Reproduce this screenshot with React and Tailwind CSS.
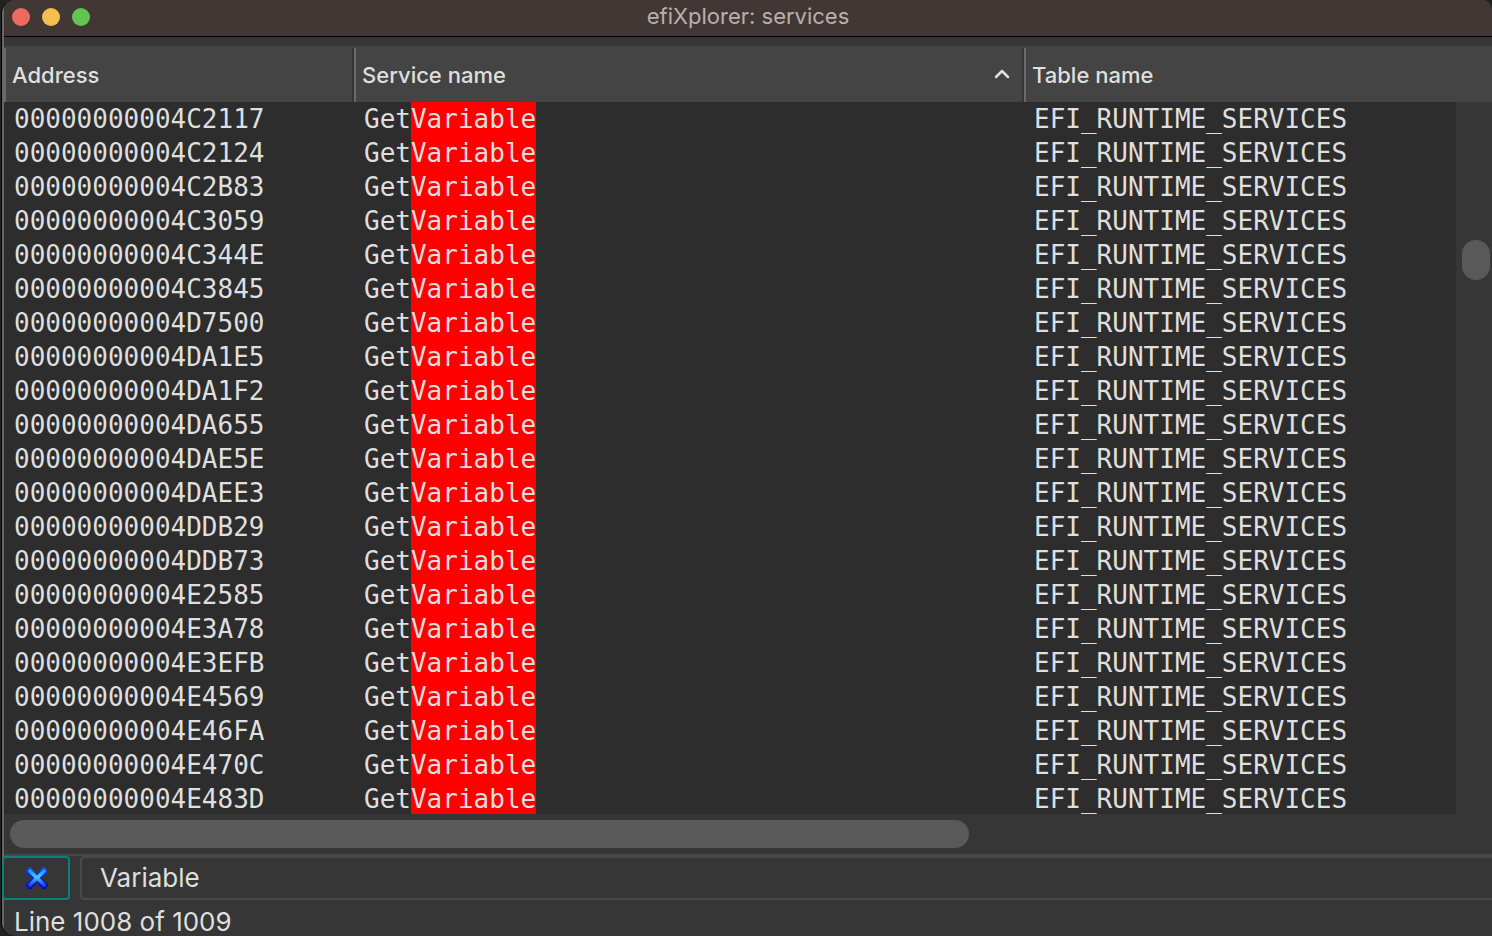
import { useState } from "react";

const ADDRESSES = [
  "4C2117",
  "4C2124",
  "4C2B83",
  "4C3059",
  "4C344E",
  "4C3845",
  "4D7500",
  "4DA1E5",
  "4DA1F2",
  "4DA655",
  "4DAE5E",
  "4DAEE3",
  "4DDB29",
  "4DDB73",
  "4E2585",
  "4E3A78",
  "4E3EFB",
  "4E4569",
  "4E46FA",
  "4E470C",
  "4E483D",
];

const services = ADDRESSES.map((address) => ({
  address: address.padStart(16, "0"),
  name: "GetVariable",
  table: "EFI_RUNTIME_SERVICES",
}));

const App = () => {
  const [filter, setFilter] = useState("Variable");

  return (
    <div className="h-screen overflow-hidden bg-[#222222] pl-px font-['Inter',sans-serif] text-[#dfdfdf]">
      <main className="flex h-full flex-col overflow-hidden rounded-l-[14px] rounded-tr-[10px] border-l border-black bg-[#363636]">
        <div className="flex min-h-0 flex-1 flex-col border-l-2 border-[#686868]">
          <TitleBar />
          <div className="flex min-h-0 flex-1 pt-[9px]">
            <div className="min-w-0 flex-1 overflow-hidden bg-[#2d2d2d]">
              <ServiceTable filter={filter} />
            </div>
            <VerticalScrollbar />
          </div>
          <div className="h-10 shrink-0 px-[6px] py-[6px]">
            <div className="h-7 w-[65%] rounded-full bg-[#595959]" />
          </div>
          <FilterBar filter={filter} setFilter={setFilter} />
          <p className="h-9 shrink-0 px-[10px] pt-1 text-[26px] leading-9">
            Line 1008 of 1009
          </p>
        </div>
      </main>
    </div>
  );
};

export default App;

const TitleBar = () => (
  <header className="grid h-[37px] shrink-0 grid-cols-[1fr_auto_1fr] items-center border-b border-black bg-[#413735] px-2 pb-[3px]">
    <div className="flex gap-3">
      <button aria-label="Close" className="size-[18px] rounded-full bg-[#ed6a5e]" />
      <button aria-label="Minimize" className="size-[18px] rounded-full bg-[#f5bf4f]" />
      <button aria-label="Zoom" className="size-[18px] rounded-full bg-[#61c554]" />
    </div>
    <h1 className="pb-[2px] text-[22px] leading-7 text-[#b8b0ae]">
      efiXplorer: services
    </h1>
  </header>
);

const ServiceTable = ({ filter }) => (
  <table className="w-full table-fixed border-collapse text-left">
    <colgroup>
      <col className="w-[350px]" />
      <col className="w-[670px]" />
      <col />
    </colgroup>
    <thead>
      <tr className="h-14 bg-[#444444] text-[22px] leading-8">
        <HeaderCell label="Address" />
        <HeaderCell label="Service name" sorted />
        <HeaderCell label="Table name" last />
      </tr>
    </thead>
    <tbody className="font-['DejaVu_Sans_Mono',monospace] text-[26px] leading-[34px]">
      {services.map((service) => (
        <tr key={service.address}>
          <td className="p-0 pl-[10px]">{service.address}</td>
          <td className="p-0 pl-[10px]">
            <Highlight text={service.name} match={filter} />
          </td>
          <td className="p-0 pl-[10px]">{service.table}</td>
        </tr>
      ))}
    </tbody>
  </table>
);

const HeaderCell = ({ label, sorted, last }) => (
  <th
    className="p-0 pt-[2px] font-medium"
    aria-sort={sorted ? "ascending" : undefined}
  >
    <button
      className={`flex h-[54px] w-full items-center justify-between border-l-2 border-l-[#6a6a6a] pr-3 pl-[6px] ${
        last ? "" : "border-r-2 border-r-[#363636]"
      }`}
    >
      {label}
      {sorted && (
        <svg width="16" height="12" viewBox="0 0 16 12" fill="none">
          <path
            d="M2 8L8 2L14 8"
            stroke="#dfdfdf"
            strokeWidth="2.5"
            strokeLinecap="round"
            strokeLinejoin="round"
          />
        </svg>
      )}
    </button>
  </th>
);

// Marks the part of the text that matches the quick filter
const Highlight = ({ text, match }) => {
  const start = match ? text.indexOf(match) : -1;
  if (start < 0) return text;

  return (
    <span className="flex">
      {text.slice(0, start)}
      <mark className="bg-[#ff0000] text-[#dfdfdf]">{match}</mark>
      {text.slice(start + match.length)}
    </span>
  );
};

const VerticalScrollbar = () => (
  <div className="w-9 shrink-0">
    <div className="h-14 bg-[#444444]" />
    <div className="mt-[138px] ml-[6px] h-10 w-7 rounded-full bg-[#595959]" />
  </div>
);

const FilterBar = ({ filter, setFilter }) => (
  <div className="flex h-[46px] shrink-0 gap-[10px] border-t-2 border-[#494949]">
    <button
      aria-label="Clear filter"
      className="-ml-[2px] flex w-[68px] items-center justify-center rounded-[4px] border-2 border-[#0c807b]"
      onClick={() => setFilter("")}
    >
      <ClearIcon />
    </button>
    <input
      type="text"
      aria-label="Quick filter"
      className="min-w-0 flex-1 rounded-l-[4px] border-2 border-r-0 border-[#494949] pb-[2px] pl-[18px] text-[26px] outline-none"
      value={filter}
      onChange={(e) => setFilter(e.target.value)}
    />
  </div>
);

const ClearIcon = () => (
  <svg
    width="22"
    height="22"
    viewBox="0 0 11 11"
    fill="none"
    className="ml-[2px]"
  >
    <defs>
      <linearGradient id="clear-edge" x1="0" y1="0" x2="0" y2="1">
        <stop offset="0" stopColor="#0a4be0" />
        <stop offset="1" stopColor="#0606a8" />
      </linearGradient>
      <linearGradient id="clear-fill" x1="0" y1="0" x2="0" y2="1">
        <stop offset="0" stopColor="#1f9cff" />
        <stop offset="0.45" stopColor="#4fc6fa" />
        <stop offset="1" stopColor="#1446ee" />
      </linearGradient>
    </defs>
    <path
      d="M1 0h2v1h1v1h1v1h1v-1h1v-1h1v-1h2v1h1v2h-1v1h-1v1h-1v1h1v1h1v1h1v2h-1v1h-2v-1h-1v-1h-1v-1h-1v1h-1v1h-1v1h-2v-1h-1v-2h1v-1h1v-1h1v-1h-1v-1h-1v-1h-1v-2h1z"
      fill="url(#clear-edge)"
      shapeRendering="crispEdges"
    />
    <path
      d="M2 2L9 9M9 2L2 9"
      stroke="url(#clear-fill)"
      strokeWidth="1.9"
      strokeLinecap="round"
    />
  </svg>
);
